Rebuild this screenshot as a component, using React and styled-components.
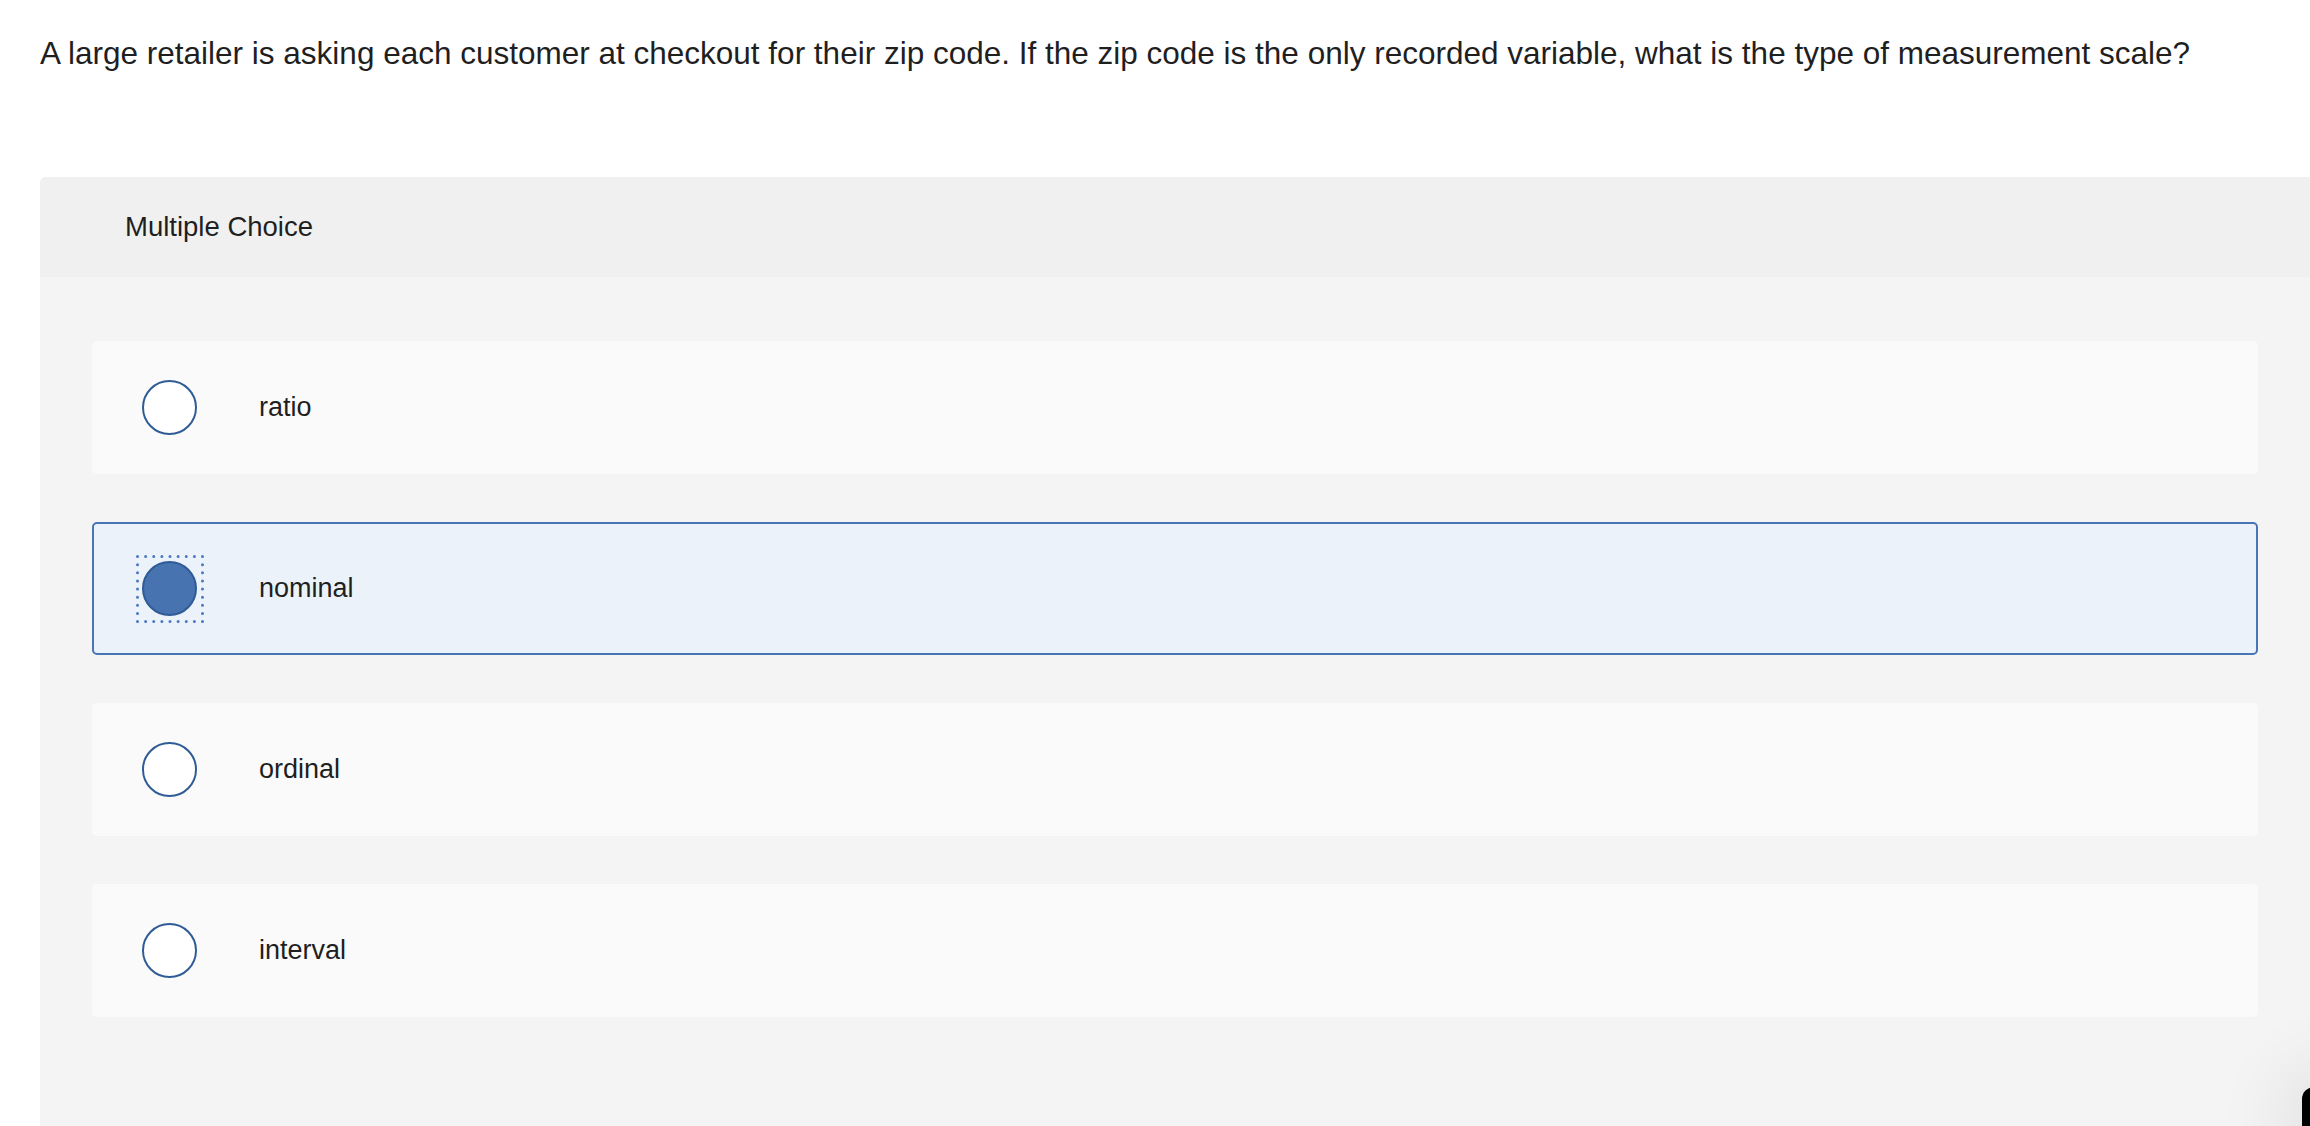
import React, { useState } from "react";
import styled, { createGlobalStyle } from "styled-components";

const FONT = `"Liberation Sans", Arial, sans-serif`;

const GlobalStyle = createGlobalStyle`
  body {
    margin: 0;
    background: #ffffff;
    font-family: ${FONT};
    color: #1f1f1f;
  }
`;

const options = [
  { id: "a", label: "ratio" },
  { id: "b", label: "nominal" },
  { id: "c", label: "ordinal" },
  { id: "d", label: "interval" },
];

const QUESTION =
  "A large retailer is asking each customer at checkout for their zip code. If the zip code is the only recorded variable, what is the type of measurement scale?";

function App() {
  const [selected, setSelected] = useState("b");

  return (
    <Page>
      <GlobalStyle />
      <Question>{QUESTION}</Question>
      <Panel>
        <PanelHeader>Multiple Choice</PanelHeader>
        <OptionList>
          {options.map((opt) => (
            <Option
              key={opt.id}
              $active={selected === opt.id}
              onClick={() => setSelected(opt.id)}
            >
              <RadioWrap>
                <Radio $active={selected === opt.id} />
                {selected === opt.id && (
                  <FocusRing viewBox="0 0 68 68">
                    <rect
                      x="1.5"
                      y="1.5"
                      width="65"
                      height="65"
                      fill="none"
                      stroke="#4a78c2"
                      strokeWidth="3"
                      strokeLinecap="round"
                      strokeDasharray="0 8.125"
                    />
                  </FocusRing>
                )}
              </RadioWrap>
              <Label>{opt.label}</Label>
            </Option>
          ))}
        </OptionList>
      </Panel>
      <ChatButton />
    </Page>
  );
}

export default App;

const Page = styled.div`
  padding-left: 40px;
  min-height: 1126px;
  box-sizing: border-box;
  overflow: hidden;
  position: relative;
`;

const Question = styled.div`
  padding-top: 35px;
  font-size: 31.5px;
  line-height: 36px;
  color: #1f1f1f;
  white-space: nowrap;
`;

const Panel = styled.div`
  margin-top: 106px;
  background: #f4f4f4;
  border-radius: 6px 0 0 0;
  min-height: 949px;
`;

const PanelHeader = styled.div`
  height: 100px;
  display: flex;
  align-items: center;
  padding-left: 85px;
  background: #f0f0f0;
  border-radius: 6px 0 0 0;
  font-size: 27.5px;
  color: #1f1f1f;
`;

const OptionList = styled.div`
  display: flex;
  flex-direction: column;
  gap: 48px;
  padding: 64px 52px 0 52px;
`;

const Option = styled.div`
  height: 133px;
  box-sizing: border-box;
  display: flex;
  align-items: center;
  padding-left: 48px;
  border-radius: 5px;
  border: 2px solid ${(p) => (p.$active ? "#4a75b5" : "transparent")};
  background: ${(p) => (p.$active ? "#ebf2fa" : "#fafafa")};
  cursor: pointer;
`;

const RadioWrap = styled.div`
  position: relative;
  width: 55px;
  height: 55px;
  flex-shrink: 0;
`;

const Radio = styled.div`
  width: 55px;
  height: 55px;
  box-sizing: border-box;
  border-radius: 50%;
  border: 2px solid #2f5c96;
  background: ${(p) => (p.$active ? "#4773b1" : "#ffffff")};
`;

const FocusRing = styled.svg`
  position: absolute;
  left: -6px;
  top: -6px;
  width: 68px;
  height: 68px;
`;

const Label = styled.span`
  margin-left: 62px;
  font-size: 27px;
  color: #1f1f1f;
`;

const ChatButton = styled.div`
  position: absolute;
  left: 2302px;
  top: 1087px;
  width: 60px;
  height: 60px;
  border-radius: 12px;
  background: #000000;
  box-shadow: 0 0 70px 20px rgba(0, 0, 0, 0.08);
`;
